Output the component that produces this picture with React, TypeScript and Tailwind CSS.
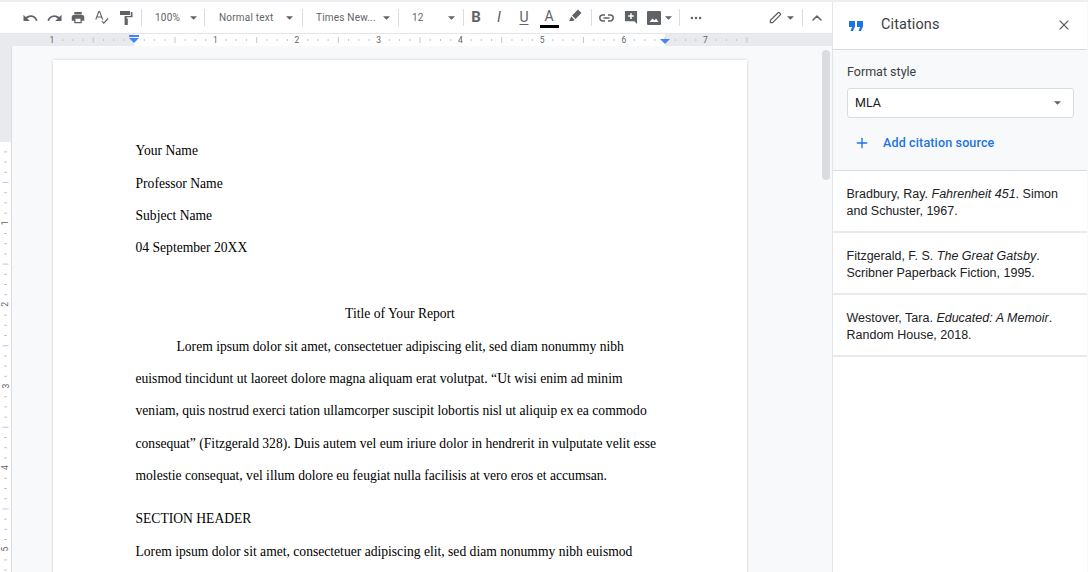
import React from "react";
import { ChevronUp, MoreHorizontal, Plus, X } from "lucide-react";

const Caret = ({ className = "" }: { className?: string }) => (
  <svg width="7" height="4" viewBox="0 0 8 4" className={className}>
    <path d="M0 0h8L4 4z" fill="#5f6368" />
  </svg>
);

const Sep = () => <div className="w-px h-[17px] bg-[#dadce0]" />;

const Select = ({ label, width }: { label: string; width: string }) => (
  <div className={`flex items-center justify-between ${width}`}>
    <span className="text-[10px] text-[#5f6368] tracking-[0.2px]">{label}</span>
    <Caret />
  </div>
);

const Toolbar = () => (
  <div className="h-[31px] flex items-center pl-[23px] bg-white text-[#5f6368]">
    <svg width="15" height="8" viewBox="0 0 15 8" fill="#5f6368">
      <path d="M7.8 1.2C5.8 1.2 4 2 2.7 3.1L.5.8V7h6.2L4.2 4.6C5.2 3.7 6.4 3.1 7.8 3.1c2.5 0 4.4 1.5 5.1 3.9l1.7-.5C13.7 3.3 11 1.2 7.8 1.2z" />
    </svg>
    <svg width="15" height="8" viewBox="0 0 15 8" fill="#5f6368" className="ml-[9px]">
      <path d="M7.2 1.2c2 0 3.8.8 5.1 1.9L14.5.8V7H8.3l2.5-2.4C9.8 3.7 8.6 3.1 7.2 3.1c-2.5 0-4.4 1.5-5.1 3.9L.4 6.5C1.3 3.3 4 1.2 7.2 1.2z" />
    </svg>
    <svg width="16" height="15" viewBox="0 0 24 24" fill="#5f6368" className="ml-[8px]">
      <path d="M19 8H5c-1.7 0-3 1.3-3 3v6h4v4h12v-4h4v-6c0-1.7-1.3-3-3-3zm-3 11H8v-5h8v5zM18 3H6v4h12V3z" />
    </svg>
    <svg width="15" height="15" viewBox="0 0 15 15" fill="none" stroke="#5f6368" className="ml-[9px]">
      <path d="M.8 9.5 3.8 1.5h.8l3 8M1.9 7h5.2" strokeWidth="1.1" />
      <path d="M6.8 11.2l2 2 4.4-4.7" strokeWidth="1.1" />
    </svg>
    <svg width="13" height="15" viewBox="0 0 13 15" fill="#5f6368" className="ml-[10px]">
      <path d="M0 1h10v4H0zM10.8 2H12.5v5.2H6.6v1.3h1.2V15H4.6V6H10.8z" />
    </svg>
    <div className="ml-[8px] mr-[13px]">
      <Sep />
    </div>
    <Select label="100%" width="w-[42px]" />
    <div className="ml-[7px] mr-[8px]">
      <Sep />
    </div>
    <div className="ml-[6px]">
      <Select label="Normal text" width="w-[74px]" />
    </div>
    <div className="ml-[9px] mr-[13px]">
      <Sep />
    </div>
    <Select label="Times New..." width="w-[74px]" />
    <div className="ml-[8px] mr-[13px]">
      <Sep />
    </div>
    <Select label="12" width="w-[43px]" />
    <div className="ml-[8px] mr-[6px]">
      <Sep />
    </div>
    <span className="w-[12px] text-center text-[15px] font-bold">B</span>
    <span className="w-[12px] ml-[11px] text-center text-[15px] italic">I</span>
    <span className="w-[12px] ml-[13px] text-center text-[14px] underline underline-offset-2">U</span>
    <div className="ml-[9px] flex flex-col items-center w-[20px] pt-[1px]">
      <span className="text-[14px] leading-[14px]">A</span>
      <div className="w-[19px] h-[3px] bg-black mt-[2px]" />
    </div>
    <svg width="14" height="14" viewBox="0 0 14 14" fill="#5f6368" className="ml-[9px] mb-[3px]">
      <path d="M10 .5l3.5 3.5-6 6-3.5-3.5zM3.3 7.5l3.2 3.2-1.3 1.3H1.5v-1z" />
    </svg>
    <div className="ml-[9px] mr-[7px]">
      <Sep />
    </div>
    <svg width="15" height="8" viewBox="0 0 15 8" fill="none" stroke="#5f6368" strokeWidth="1.5">
      <path d="M6 1H3.8a3 3 0 0 0 0 6H6M9 1h2.2a3 3 0 0 1 0 6H9M4.5 4h6" />
    </svg>
    <svg width="14" height="15" viewBox="0 0 15 16" className="ml-[10px]">
      <path d="M1 1h13v14l-3-3H1z" fill="#5f6368" />
      <path d="M7.5 3.5v6M4.5 6.5h6" stroke="#fff" strokeWidth="1.6" />
    </svg>
    <svg width="14" height="14" viewBox="0 0 14 14" className="ml-[9px]">
      <rect width="14" height="14" rx="1" fill="#5f6368" />
      <path d="M2.5 11 5.5 7.5 7.5 9.5 9 7.5 11.5 11z" fill="#fff" />
    </svg>
    <Caret className="ml-[4px]" />
    <div className="ml-[7px] mr-[9px]">
      <Sep />
    </div>
    <MoreHorizontal size={14} strokeWidth={2.2} />
    <svg width="13" height="13" viewBox="0 0 14 14" fill="none" stroke="#5f6368" strokeWidth="1.4" className="ml-[66px]">
      <path d="M1.5 12.5v-2.4L9.8 1.8a1 1 0 0 1 1.4 0l1 1a1 1 0 0 1 0 1.4L3.9 12.5z" />
    </svg>
    <Caret className="ml-[5px]" />
    <div className="ml-[8px] mr-[6px]">
      <Sep />
    </div>
    <ChevronUp size={16} strokeWidth={2.4} />
  </div>
);

const HRuler = () => {
  const ticks = [];
  for (let i = -1; i <= 7.5; i += 0.125) ticks.push(i);
  return (
    <svg width="822" height="12" className="block">
      <rect width="822" height="12" fill="#e8eaed" />
      <rect x="134" width="531" height="12" fill="#fff" />
      {ticks.map((t) => {
        const x = 133.6 + t * 81.7;
        if (Number.isInteger(t)) return null;
        const half = Number.isInteger(t * 2);
        return (
          <rect key={t} x={x} y={half ? 3 : 5} width="1" height={half ? 6 : 2} fill="#c4c7cb" />
        );
      })}
      {[-1, 1, 2, 3, 4, 5, 6, 7].map((n) => (
        <text key={n} x={133.6 + n * 81.7} y="9" textAnchor="middle" fontSize="8.5" fontFamily="Roboto, sans-serif" fill="#5f6368">
          {Math.abs(n)}
        </text>
      ))}
      <path d="M129 1h10v2h-10z" fill="#4285f4" />
      <path d="M129 4h10l-5 5z" fill="#4285f4" />
      <path d="M660 5h10l-5 5z" fill="#4285f4" />
    </svg>
  );
};

const VRuler = () => {
  const ticks = [];
  for (let i = 1; i < 56; i++) ticks.push(i);
  const origin = 95.2;
  return (
    <svg width="12" height="526" className="block shrink-0">
      <rect width="11" height="526" fill="#fff" />
      <rect width="11" height="96" fill="#e8eaed" />
      <rect x="11" width="1" height="526" fill="#dadce0" />
      {ticks.map((i) => {
        if (i % 8 === 0) return null;
        const major = i % 4 === 0;
        return (
          <rect key={i} x={major ? 2.5 : 4} y={origin + i * 10.2} width={major ? 6 : 3} height="1" fill="#c4c7cb" />
        );
      })}
      {[1, 2, 3, 4, 5].map((n) => (
        <text
          key={n}
          x="5.5"
          y={origin + n * 81.6}
          textAnchor="middle"
          fontSize="8.5"
          fontFamily="Roboto, sans-serif"
          fill="#5f6368"
          transform={`rotate(-90 5.5 ${origin + n * 81.6})`}
          dominantBaseline="central"
        >
          {n}
        </text>
      ))}
    </svg>
  );
};

const Line = ({ children, className = "" }: { children: React.ReactNode; className?: string }) => (
  <p className={`h-[32.35px] leading-[32.35px] whitespace-nowrap ${className}`}>{children}</p>
);

const Page = () => (
  <div className="ml-[41px] mt-[14px] w-[694px] h-[700px] shrink-0 bg-white shadow-[0_0_3px_rgba(0,0,0,0.18)] pt-[75.2px] pl-[82.5px] font-['Liberation_Serif',serif] text-[13.6px] text-black">
    <Line>Your Name</Line>
    <Line>Professor Name</Line>
    <Line>Subject Name</Line>
    <Line>04 September 20XX</Line>
    <Line className="mt-[33.2px] text-center pr-[82.5px]">Title of Your Report</Line>
    <Line className="mt-[0.5px] pl-[41px]">Lorem ipsum dolor sit amet, consectetuer adipiscing elit, sed diam nonummy nibh</Line>
    <Line>euismod tincidunt ut laoreet dolore magna aliquam erat volutpat. “Ut wisi enim ad minim</Line>
    <Line>veniam, quis nostrud exerci tation ullamcorper suscipit lobortis nisl ut aliquip ex ea commodo</Line>
    <Line>consequat” (Fitzgerald 328). Duis autem vel eum iriure dolor in hendrerit in vulputate velit esse</Line>
    <Line>molestie consequat, vel illum dolore eu feugiat nulla facilisis at vero eros et accumsan.</Line>
    <Line className="mt-[10.6px]">SECTION HEADER</Line>
    <Line className="mt-[0.6px]">Lorem ipsum dolor sit amet, consectetuer adipiscing elit, sed diam nonummy nibh euismod</Line>
  </div>
);

const Source = ({ before, title, after }: { before: string; title: string; after: string }) => (
  <div className="h-[62px] border-b-2 border-[#e8eaed] pl-[13.5px] pr-[20px] pt-[15px] font-['Liberation_Sans',sans-serif] text-[12.5px] leading-[17px] text-[#202124]">
    {before} <i>{title}</i>
    {after}
  </div>
);

const Sidebar = () => (
  <div className="w-[255px] shrink-0 border-l border-[#e3e5e8] bg-white font-['Roboto',sans-serif] flex flex-col">
    <div className="h-[48px] shrink-0 flex items-center pl-[16px] pr-[16px] border-b border-[#dadce0]">
      <svg width="14" height="10" viewBox="0 0 14 10" fill="#1a73e8">
        <path d="M0 0h6v5.5L4 10H1.5l1.6-4H0zM8 0h6v5.5L12 10H9.5l1.6-4H8z" />
      </svg>
      <span className="ml-[18px] mb-[1px] text-[14.5px] text-[#3c4043] tracking-[0.1px]">Citations</span>
      <X size={16} strokeWidth={1.6} className="ml-auto mr-[-1px] mb-[1px] text-[#5f6368]" />
    </div>
    <div className="h-[121px] shrink-0 bg-[#f8f9fa] border-b border-[#dadce0] pl-[14px] pr-[13px] pt-[14px]">
      <div className="text-[12.5px] leading-[16px] text-[#3c4043]">Format style</div>
      <div className="mt-[8px] h-[30px] bg-white border border-[#dadce0] rounded-[3px] flex items-center justify-between pl-[7px] pr-[12px] text-[12.5px] text-[#202124]">
        MLA
        <Caret />
      </div>
      <div className="mt-[16px] flex items-center pl-[7px]">
        <Plus size={16} strokeWidth={2} className="text-[#1a73e8]" />
        <span className="ml-[13px] text-[12.5px] font-medium tracking-[0.15px] text-[#1a73e8]">Add citation source</span>
      </div>
    </div>
    <Source before="Bradbury, Ray." title="Fahrenheit 451" after=". Simon and Schuster, 1967." />
    <Source before="Fitzgerald, F. S." title="The Great Gatsby" after=". Scribner Paperback Fiction, 1995." />
    <Source before="Westover, Tara." title="Educated: A Memoir" after=". Random House, 2018." />
  </div>
);

export default function App() {
  return (
    <div className="w-[1088px] h-[572px] overflow-hidden flex flex-col bg-[#f8f9fa] font-['Roboto',sans-serif]">
      <div className="h-[2px] shrink-0 bg-[#eceef1]" />
      <div className="flex flex-1 min-h-0">
        <div className="w-[832px] shrink-0 flex flex-col min-h-0 relative">
          <Toolbar />
          <div className="h-px bg-[#e3e5e8]" />
          <div className="flex items-start">
            <HRuler />
            <div className="w-[10px] h-[12px] bg-[#e8eaed]" />
          </div>
          <div className="flex flex-1 min-h-0 overflow-hidden">
            <VRuler />
            <Page />
          </div>
          <div className="absolute right-[2px] top-[48px] w-[8px] h-[130px] rounded-full bg-[#dadce0]" />
        </div>
        <Sidebar />
      </div>
    </div>
  );
}
